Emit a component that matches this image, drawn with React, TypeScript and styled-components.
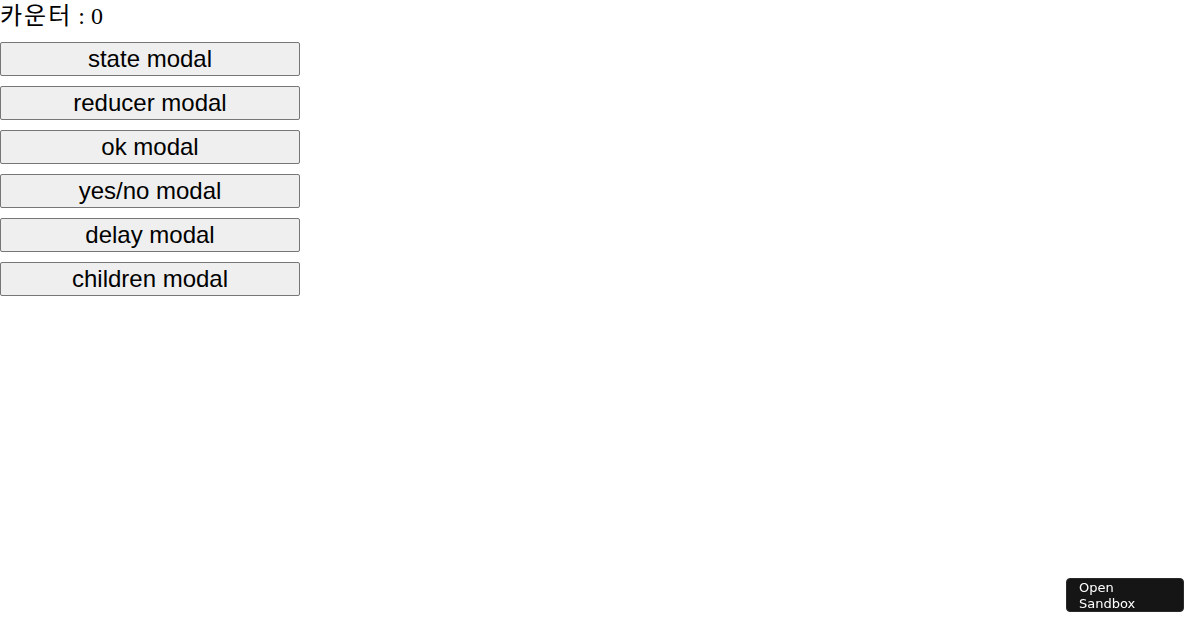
import * as React from 'react';
import styled, { createGlobalStyle } from 'styled-components';

const GlobalStyle = createGlobalStyle`
  html, body {
    margin: 0;
    padding: 0;
    background: #ffffff;
  }
`;

const Page = styled.div`
  display: flex;
  flex-direction: column;
  align-items: flex-start;
  gap: 10px;
`;

const Counter = styled.div`
  font-family: "Liberation Serif", "Noto Sans CJK KR", serif;
  font-size: 24px;
  line-height: 32px;
  color: #000;
`;

// hangul in the shot is set a little wider than Noto's 0.92em
const Label = styled.span`
  letter-spacing: 2px;
`;

const ModalButton = styled.button`
  box-sizing: border-box;
  width: 300px;
  height: 34px;
  margin: 0;
  padding: 0;
  font-family: "Liberation Sans", Arial, sans-serif;
  font-size: 24px;
  color: #000;
  background: #efefef;
  border: 1px solid #767676;
  border-radius: 2px;
`;

const SandboxLink = styled.a`
  position: fixed;
  right: 16px;
  bottom: 18px;
  box-sizing: border-box;
  width: 118px;
  height: 34px;
  padding: 1px 40px 0 12px;
  background: #151515;
  border: 1px solid #2a2a2a;
  border-radius: 4px;
  color: #fff;
  font-family: "DejaVu Sans", Verdana, sans-serif;
  font-size: 13px;
  line-height: 16px;
  text-decoration: none;
`;

const modals = ['state modal', 'reducer modal', 'ok modal', 'yes/no modal', 'delay modal', 'children modal'];

export default function App() {
  const [count] = React.useState(0);
  return (
    <>
      <GlobalStyle />
      <Page>
        <Counter>
          <Label>카운터</Label> : {count}
        </Counter>
        {modals.map((m) => (
          <ModalButton key={m}>{m}</ModalButton>
        ))}
      </Page>
      <SandboxLink href="#">Open Sandbox</SandboxLink>
    </>
  );
}
